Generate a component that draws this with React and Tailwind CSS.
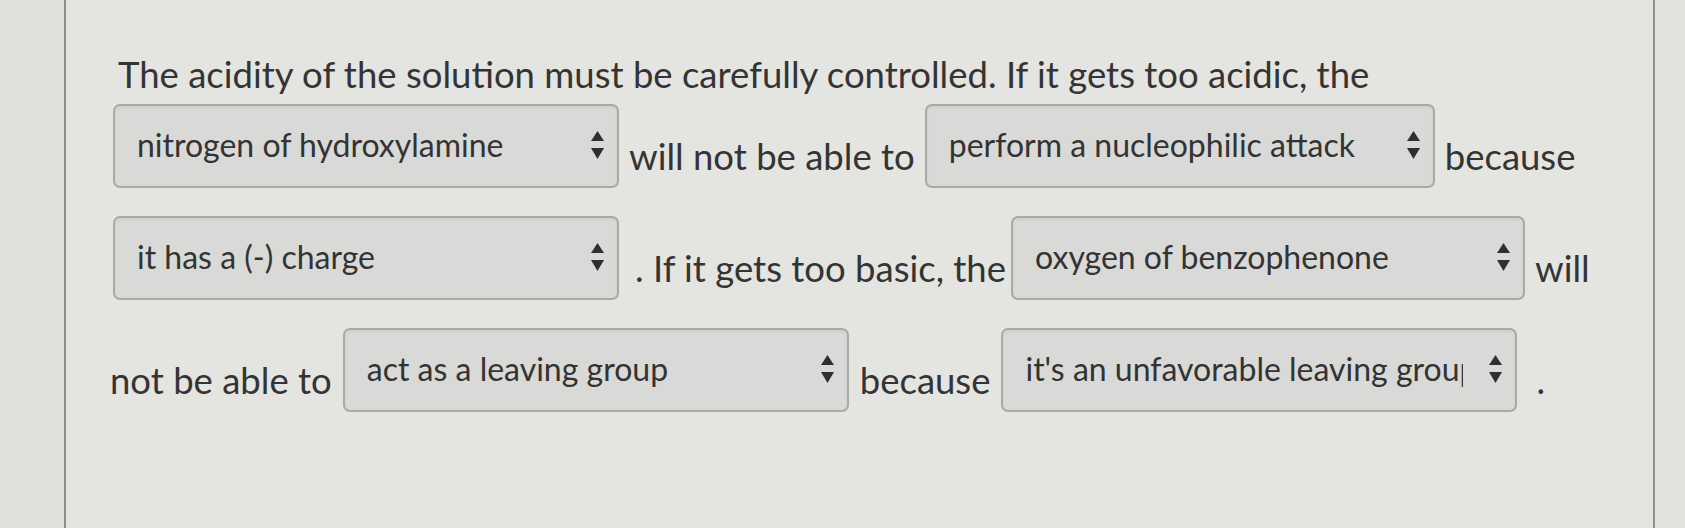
import React from "react";

function Arrows() {
  return (
    <svg width="13" height="28" viewBox="0 0 13 28" className="shrink-0 mt-[25px] ml-[26px]">
      <path d="M6.5 0 L13 10 L0 10 Z" fill="#2f2f2f" />
      <path d="M0 17 L13 17 L6.5 28 Z" fill="#2f2f2f" />
    </svg>
  );
}

function Select({ text, w = "w-[506px]" }) {
  return (
    <div
      className={`${w} h-[84px] shrink-0 rounded-[7px] border-2 border-[#a9a9a7] bg-[#d9d9d7] shadow-[inset_0_2px_3px_rgba(0,0,0,0.06)] flex items-start pl-[22px] pr-[13px]`}
    >
      <span className="flex-1 min-w-0 overflow-hidden whitespace-nowrap text-[32px] leading-[38px] text-[#333333] mt-[20px]">
        {text}
      </span>
      <Arrows />
    </div>
  );
}

function T({ children, className = "" }) {
  return (
    <span className={`mt-[31px] text-[36.5px] leading-[42px] text-[#343434] whitespace-nowrap ${className}`}>
      {children}
    </span>
  );
}

export default function App() {
  return (
    <div className="w-[1685px] h-[528px] overflow-hidden flex bg-[#e4e4e1] font-['Lato',sans-serif]">
      <div className="w-[66px] shrink-0 bg-[#e0e0dd] border-r-2 border-[#8f8f8f]" />
      <div className="flex-1 pl-[47px] pt-[53px] flex flex-col">
        <div className="ml-[5px] text-[36.5px] leading-[42px] text-[#343434] whitespace-nowrap">
          The acidity of the solution must be carefully controlled. If it gets too acidic, the
        </div>
        <div className="mt-[9px] flex flex-col gap-[28px]">
          <div className="flex items-start gap-[10px]">
            <Select text="nitrogen of hydroxylamine" />
            <T>will not be able to</T>
            <Select text="perform a nucleophilic attack" w="w-[510px]" />
            <T>because</T>
          </div>
          <div className="flex items-start gap-[10px]">
            <Select text="it has a (-) charge" />
            <T className="ml-[6px] -mr-[5px]">. If it gets too basic, the</T>
            <Select text="oxygen of benzophenone" w="w-[514px]" />
            <T>will</T>
          </div>
          <div className="flex items-start gap-[11px] -ml-[3px]">
            <T>not be able to</T>
            <Select text="act as a leaving group" />
            <T>because</T>
            <Select text="it's an unfavorable leaving group" w="w-[516px]" />
            <T className="ml-[8px]">.</T>
          </div>
        </div>
      </div>
      <div className="w-[32px] shrink-0 bg-[#e2e2df] border-l-2 border-[#8f8f8f]" />
    </div>
  );
}
